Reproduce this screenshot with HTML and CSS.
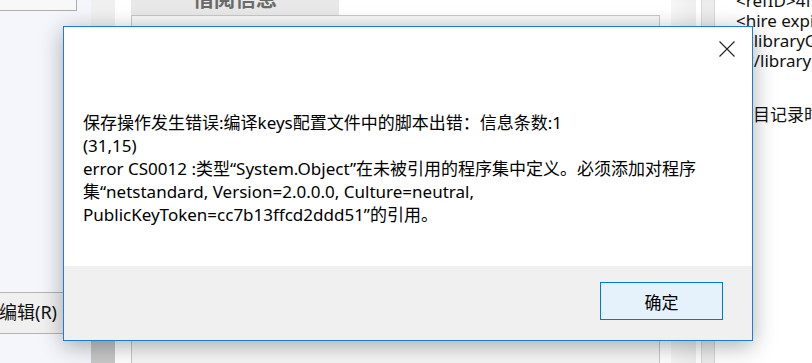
FILE: index.html
```html
<!DOCTYPE html>
<html lang="zh-CN">
<head>
    <meta charset="UTF-8">
    <title>错误</title>
    <link rel="stylesheet" href="styles.css">
</head>
<body>

<div class="app">
    <div class="left-pane">
        <div class="left-box"></div>
        <div class="left-fill"></div>
        <div class="edit-btn">编辑(R)</div>
        <div class="left-fill small"></div>
    </div>

    <div class="scroll-col">
        <div class="scroll-track"></div>
        <div class="scroll-thumb"></div>
    </div>

    <div class="gap-col"></div>

    <div class="main-pane">
        <div class="tab-row">
            <div class="tab"><span>借阅信息</span></div>
        </div>
        <div class="panel">
            <div class="panel-info">最后下载:20 &nbsp; 当前下载:20</div>
        </div>
    </div>

    <div class="side-col">
        <div class="side-band"></div>
    </div>

    <div class="v-scroll"></div>

    <div class="xml-pane">
        <div class="xml-line">&lt;refID&gt;4f2b</div>
        <div class="xml-line">&lt;hire expire</div>
        <div class="xml-line indent">&lt;libraryCode</div>
        <div class="xml-line indent">&lt;/libraryCode</div>
        <div class="xml-line blank">&nbsp;</div>
        <div class="xml-line">项目记录时间</div>
    </div>
</div>

<!-- 错误对话框 -->
<div class="dialog">
    <div class="dialog-body">
        <svg class="close-icon" width="16" height="16" viewBox="0 0 16 16">
            <path d="M0.5 0.5 L15.5 15.5 M15.5 0.5 L0.5 15.5" stroke="#222" stroke-width="1.1" fill="none"/>
        </svg>
        <p class="message">保存操作发生错误:编译keys配置文件中的脚本出错：信息条数:1<br>(31,15)<br>error CS0012 :类型“System.Object”在未被引用的程序集中定义。必须添加对程序<br>集“netstandard, Version=2.0.0.0, Culture=neutral,<br>PublicKeyToken=cc7b13ffcd2ddd51”的引用。</p>
    </div>
    <div class="dialog-foot">
        <button class="ok-btn">确定</button>
    </div>
</div>

</body>
</html>
```

FILE: styles.css
```css
:root {
    --accent: #1a7fd4;
    --face: #f0f0f0;
    --ui: "Noto Sans", "Noto Sans CJK SC", sans-serif;
}
html, body {
    margin: 0;
    padding: 0;
}
body {
    width: 812px;
    height: 363px;
    overflow: hidden;
    position: relative;
    font-family: var(--ui);
    background: #fff;
}

.app {
    display: flex;
    height: 363px;
}
.app > div { flex-shrink: 0; }

/* 左侧面板 */
.left-pane {
    width: 91px;
    background: #f5f6fb;
    display: flex;
    flex-direction: column;
}
.left-box {
    width: 76px;
    height: 10px;
    background: #f8f8f8;
    border-right: 1px solid #adadad;
    border-bottom: 1px solid #adadad;
}
.left-fill { flex: 1; }
.left-fill.small { flex: 0 0 29px; }
.edit-btn {
    height: 40px;
    line-height: 38px;
    background: var(--face);
    border-top: 1px solid #b4b4b4;
    border-bottom: 1px solid #b4b4b4;
    font-size: 18px;
    color: #111;
    text-indent: -1px;
    white-space: nowrap;
}

.scroll-col {
    width: 24px;
    display: flex;
    flex-direction: column;
}
.scroll-track { flex: 1; background: #f0f0f0; }
.scroll-thumb { height: 24px; background: #c8c8c8; }

.gap-col { width: 16px; background: #fff; }

/* 中间区域 */
.main-pane {
    width: 529px;
    display: flex;
    flex-direction: column;
}
.tab-row { height: 15px; display: flex; }
.tab {
    width: 208px;
    background: #e8e8e8;
    color: #6a6a6a;
    font-size: 21px;
    font-weight: bold;
    line-height: 0;
    text-align: center;
    overflow: hidden;
}
.tab span { display: block; margin-top: -2px; }
.panel {
    flex: 1;
    border: 1px solid #c8c8c8;
    border-bottom: none;
    background: #f7f7f7;
}
.panel-info {
    text-align: right;
    padding: 8px 14px 0 0;
    font-size: 16px;
    color: #222;
}

.side-col {
    width: 41px;
    display: flex;
    padding-left: 11px;
    box-sizing: border-box;
    background: #fff;
}
.side-band { width: 25px; background: linear-gradient(90deg, #f6f6f6, #eeeeee); }

.v-scroll {
    width: 12px;
    background: #ececec;
    border-left: 1px solid #d8d8d8;
    border-right: 1px solid #d8d8d8;
}

.app > .xml-pane {
    flex: 1 1 0;
    min-width: 0;
    padding-left: 21px;
    font-size: 17px;
    white-space: nowrap;
    overflow: hidden;
    color: #111;
}
.xml-line { height: 20px; line-height: 20px; }
.xml-line:first-child { margin-top: -9px; }
.xml-line.indent { padding-left: 8px; }
.xml-line.blank { height: 34px; }

/* 对话框 */
.dialog {
    position: absolute;
    left: 63px;
    top: 26px;
    width: 688px;
    height: 313px;
    border: 1px solid var(--accent);
    background: #fff;
    box-shadow: 0 5px 22px rgba(0, 0, 0, 0.32);
    display: flex;
    flex-direction: column;
}
.dialog-body {
    height: 239px;
    position: relative;
    padding: 0 0 0 19px;
}
.close-icon {
    position: absolute;
    right: 17px;
    top: 14px;
}
.message {
    margin: 0;
    padding-top: 84px;
    font-size: 17px;
    line-height: 23px;
    color: #000;
    white-space: nowrap;
}
.dialog-foot {
    flex: 1;
    background: var(--face);
    display: flex;
    justify-content: flex-end;
    align-items: flex-start;
    padding: 16px 29px 0 0;
}
.ok-btn {
    width: 123px;
    height: 38px;
    background: #e5f1fb;
    border: 1px solid #0078d7;
    font-family: var(--ui);
    font-size: 17px;
    color: #000;
    padding: 0;
}
```
